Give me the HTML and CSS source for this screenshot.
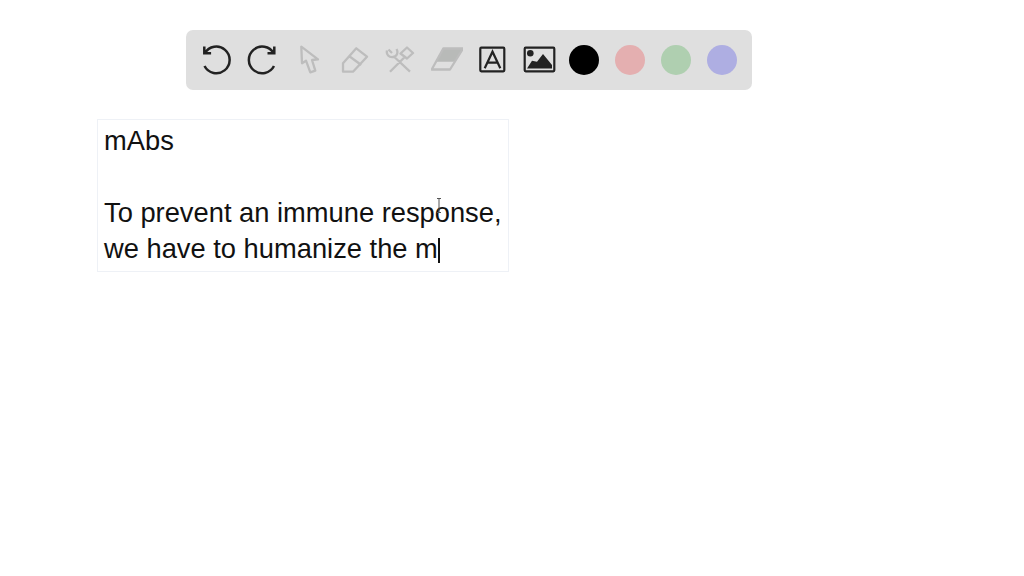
FILE: index.html
```html
<!DOCTYPE html>
<html lang="en">
<head>
<meta charset="utf-8">
<title>Whiteboard</title>
<link rel="stylesheet" href="styles.css">
</head>
<body>
<main class="page">
  <div class="toolbar">
    <svg class="tool" viewBox="0 0 30 30"><path class="stroke-dark" d="M3.300 1.500v6.800h6.800M3.800 8.300A13.300 13.300 0 1 1 3.500 21"/></svg>
    <svg class="tool" viewBox="0 0 30 30"><path class="stroke-dark" d="M27.300 1.500v6.800h-6.800M26.700 8.300A13.300 13.300 0 1 0 27 21"/></svg>
    <svg class="tool" viewBox="0 0 30 30"><path class="stroke-faint" d="M8.300 1.700L9 18.300l4-2.600 4.300 11.600 5-1.600L19 15l6-.7z"/></svg>
    <svg class="tool" viewBox="0 0 30 30"><path class="stroke-faint" d="M4 26.700v-8.400L17.300 3.300 28 11.700 14 26.700zM11 11.700l11.300 8.300"/></svg>
    <svg class="tool" viewBox="0 0 30 30"><path class="stroke-faint" d="M5 26.700L20 11.700M25 26.700L8.300 11M2 5.500c-1 4 2 7 6 6.500 4-.5 5.500-4.500 3.500-8M7 8L3.500 4.500M15.500 8.500L22 2.500l6 5.500-6 5.500z"/></svg>
    <svg class="tool tool-wide" viewBox="0 0 32 30"><path class="fill-faint" d="M12.300 3.500H32L24 16.700H4.500z"/><path class="stroke-faint" d="M12.300 3.500H32L19 24.500H.7z"/></svg>
    <svg class="tool" viewBox="0 0 30 30"><rect class="stroke-dark thin" x="3.300" y="2.700" width="24" height="23.600" rx="1"/><path class="stroke-dark thin" d="M7.700 23.300L15.500 6.700l7.800 16.600M10.500 17.700h10"/></svg>
    <svg class="tool tool-image" viewBox="0 0 34 30"><rect class="stroke-dark thin" x="2.700" y="2.700" width="29.600" height="23.600" rx="1"/><circle class="fill-dark" cx="8.300" cy="8.300" r="3.300"/><path class="fill-dark" d="M5 23.500L10 15.700 15 16.700 21 9l9 11v3.500z"/></svg>
    <span class="swatch swatch-black"></span>
    <span class="swatch swatch-red"></span>
    <span class="swatch swatch-green"></span>
    <span class="swatch swatch-blue"></span>
  </div>
  <div class="textbox">
    <p>mAbs</p>
    <p class="blank">&nbsp;</p>
    <p>To prevent an immune response,</p>
    <p>we have to humanize the m<span class="caret"></span></p>
    <svg class="ibeam" viewBox="0 0 6 15"><path d="M1 .5h4M3 .5v14M1 14.500h4"/></svg>
  </div>
</main>
</body>
</html>
```
FILE: styles.css
```css
* { box-sizing: border-box; }
html, body { margin: 0; padding: 0; background: #fff; }
body { width: 1024px; height: 576px; overflow: hidden; font-family: "Liberation Sans", Arial, sans-serif; }
.page { padding: 30px 0 0 97px; }

.toolbar {
  display: flex;
  align-items: center;
  gap: 16px;
  width: 566px;
  height: 60px;
  margin-left: 89px;
  padding-left: 15px;
  background: #dfdfdf;
  border-radius: 7px;
}
.tool { width: 30px; height: 30px; flex: none; filter: blur(.35px); }
.tool-wide { width: 32px; margin-right: -2px; }
.tool-image { width: 34px; margin: 0 -3px 0 -1px; }
.stroke-dark { fill: none; stroke: #222; stroke-width: 2.5; stroke-linejoin: miter; }
.stroke-dark.thin { stroke-width: 2.2; }
.stroke-faint { fill: none; stroke: #bdbdbd; stroke-width: 2.3; stroke-linejoin: round; }
.fill-faint { fill: #b8bab8; }
.fill-dark { fill: #222; }
.swatch { width: 30px; height: 30px; flex: none; border-radius: 50%; }
.swatch-black { background: #000; }
.swatch-red { background: #e4afb0; }
.swatch-green { background: #afcfb0; }
.swatch-blue { background: #aeaee2; }

.textbox {
  position: relative;
  width: 412px;
  height: 153px;
  margin-top: 29px;
  padding: 3px 6px;
  border: 1px solid #eef1f6;
  font-size: 27.3px;
  line-height: 36px;
  color: #111;
}
.textbox p { margin: 0; white-space: nowrap; }
.caret {
  display: inline-block;
  width: 2px;
  height: 25px;
  vertical-align: -5px;
  background: #111;
}
.ibeam { position: absolute; left: 338px; top: 78px; width: 6px; height: 15px; fill: none; stroke: #555; stroke-width: 1; }
```
